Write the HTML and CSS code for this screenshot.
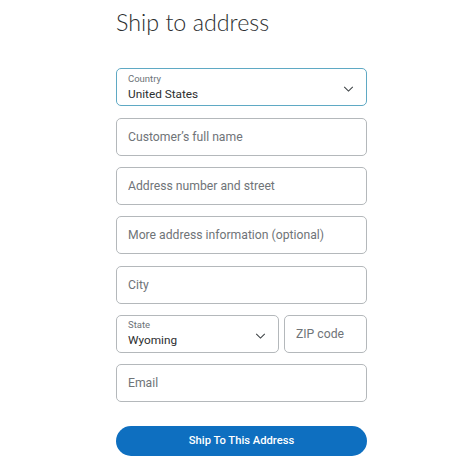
FILE: index.html
```html
<!DOCTYPE html>
<html lang="en">
<head>
  <meta charset="UTF-8">
  <title>Ship to address</title>
  <link rel="stylesheet" href="styles.css">
</head>
<body>

  <div class="ship-form">
    <h1>Ship to address</h1>

    <div class="field select focused">
      <span class="label">Country</span>
      <span class="value">United States</span>
      <svg class="chevron" viewBox="0 0 12 7" width="11" height="6"><path d="M1 1 L6 6 L11 1" fill="none" stroke="#3b4043" stroke-width="1.2"/></svg>
    </div>

    <input class="field" type="text" placeholder="Customer’s full name">
    <input class="field" type="text" placeholder="Address number and street">
    <input class="field" type="text" placeholder="More address information (optional)">
    <input class="field" type="text" placeholder="City">

    <div class="row">
      <div class="field select state">
        <span class="label">State</span>
        <span class="value">Wyoming</span>
        <svg class="chevron" viewBox="0 0 12 7" width="11" height="6"><path d="M1 1 L6 6 L11 1" fill="none" stroke="#3b4043" stroke-width="1.2"/></svg>
      </div>
      <input class="field zip" type="text" placeholder="ZIP code">
    </div>

    <input class="field" type="text" placeholder="Email">

    <button class="submit">Ship To This Address</button>
  </div>

</body>
</html>
```

FILE: styles.css
```css
body {
  margin: 0;
  background-color: #ffffff;
  font-family: Roboto, "Liberation Sans", Arial, sans-serif;
  color: #2c2e2f;
}

.ship-form {
  width: 251px;
  margin-left: 116px;
  display: flex;
  flex-direction: column;
  gap: 11.33px;
}

h1 {
  font-family: Lato, "Open Sans", sans-serif;
  font-weight: 300;
  font-size: 23.3px;
  line-height: 32px;
  color: #2c2e2f;
  margin: 6px 0 19px 0;
}

.field {
  box-sizing: border-box;
  height: 38px;
  width: 100%;
  border: 1px solid #b4b8bb;
  border-radius: 5px;
  padding: 0 11px;
  font-family: Roboto, "Liberation Sans", Arial, sans-serif;
  font-size: 12.2px;
  color: #2c2e2f;
  background-color: #ffffff;
  margin: 0;
}

.field::placeholder {
  color: #6f7478;
}

.select {
  position: relative;
  display: flex;
  flex-direction: column;
  justify-content: center;
}

.focused {
  border-color: #5fa9c4;
}

.label {
  font-size: 9.5px;
  line-height: 11px;
  color: #6c7378;
}

.value {
  font-size: 11.8px;
  line-height: 16px;
  margin-top: 2px;
}

.chevron {
  position: absolute;
  right: 12px;
  top: 17px;
}

.row {
  display: flex;
  gap: 5px;
}

.state {
  width: 163px;
  flex: none;
}

.zip {
  flex: 1;
  width: auto;
  min-width: 0;
}

.submit {
  margin-top: 12px;
  height: 30px;
  border: none;
  border-radius: 15px;
  background-color: #0e6fc0;
  color: #ffffff;
  font-family: Roboto, "Liberation Sans", Arial, sans-serif;
  font-weight: 500;
  font-size: 11.2px;
  cursor: pointer;
}

.submit:hover {
  background-color: #005ea6;
}
```
